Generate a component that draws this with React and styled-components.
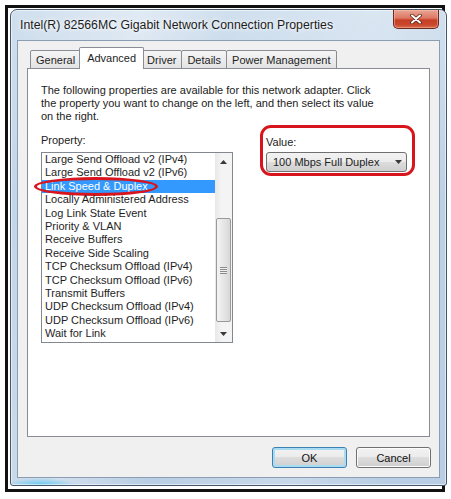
import React from "react";
import styled, { createGlobalStyle } from "styled-components";

const Global = createGlobalStyle`
  html, body { margin: 0; padding: 0; background: #fff; }
  body { font-family: "Liberation Sans", Arial, sans-serif; color: #222; }
  * { box-sizing: border-box; }
`;

const Page = styled.div`
  width: 451px;
  height: 499px;
  padding: 5px 6px 7px 5px;
  background: #fff;
`;

const Outline = styled.div`
  width: 440px;
  height: 487px;
  border: 3px solid #111;
  padding: 1px 3px 3px 2px;
  display: flex;
`;

const Window = styled.div`
  flex: 1;
  display: flex;
  flex-direction: column;
  border: 1px solid #46566a;
  border-radius: 7px 7px 3px 3px;
  padding: 0 6px 7px 6px;
  background:
    radial-gradient(ellipse 36px 7px at 30px 100%, rgba(90, 200, 240, 0.95), rgba(90, 200, 240, 0) 100%),
    linear-gradient(100deg, rgba(255,255,255,0) 0%, rgba(255,255,255,0.35) 25%, rgba(255,255,255,0) 42%, rgba(255,255,255,0.22) 70%, rgba(255,255,255,0) 88%),
    linear-gradient(180deg, #d0dfee 0%, #bdd1e6 40%, #b9cee4 100%);
  box-shadow: inset 0 0 0 1px rgba(255, 255, 255, 0.55);
`;

const TitleBar = styled.div`
  height: 30px;
  display: flex;
  justify-content: space-between;
  align-items: flex-start;
`;

const Title = styled.div`
  align-self: center;
  padding-left: 3px;
  font-size: 12.3px;
  line-height: 15px;
  color: #1c1c1c;
  white-space: nowrap;
  text-shadow: 0 0 6px rgba(255, 255, 255, 0.95), 0 0 3px rgba(255, 255, 255, 0.9);
`;

const CloseButton = styled.div`
  width: 46px;
  height: 19px;
  margin-right: 1px;
  border: 1px solid #6b2a20;
  border-top: none;
  border-radius: 0 0 5px 5px;
  display: flex;
  align-items: center;
  justify-content: center;
  background: linear-gradient(180deg, #e9a595 0%, #dc7862 45%, #c73f27 55%, #c8462c 80%, #d86a4c 100%);
  box-shadow: inset 0 0 0 1px rgba(255, 200, 180, 0.45);
`;

const Client = styled.div`
  flex: 1;
  display: flex;
  flex-direction: column;
  background: #f0f0f0;
  border: 1px solid #8b9db3;
  padding: 6px 9px 9px 9px;
`;

const TabRow = styled.div`
  height: 22px;
  display: flex;
  align-items: flex-end;
  padding-left: 3px;
  margin-bottom: -1px;
  position: relative;
  z-index: 1;
`;

const Tab = styled.div`
  height: ${(p) => (p.$active ? "22px" : "19px")};
  padding: ${(p) => (p.$active ? "0 7px 2px" : "0 5px")};
  margin: ${(p) => (p.$active ? "0 -2px 0 -2px" : "0 0 0 -1px")};
  display: flex;
  align-items: center;
  font-size: 11px;
  white-space: nowrap;
  color: #1e1e1e;
  border: 1px solid #898c95;
  border-bottom: ${(p) => (p.$active ? "none" : "1px solid #898c95")};
  border-radius: 2px 2px 0 0;
  background: ${(p) =>
    p.$active ? "#fff" : "linear-gradient(180deg, #f5f5f5 0%, #ececec 50%, #e3e3e3 100%)"};
  position: relative;
  z-index: ${(p) => (p.$active ? 2 : 1)};
  &:first-child { margin-left: 0; }
`;

const Panel = styled.div`
  flex: 1;
  background: #fff;
  border: 1px solid #898c95;
  padding: 14.5px 14px 0 13px;
`;

const Intro = styled.p`
  margin: 0;
  font-size: 11px;
  line-height: 13px;
  white-space: nowrap;
`;

const Fields = styled.div`
  display: flex;
  align-items: flex-start;
  margin-top: 2.5px;
`;

const PropertyColumn = styled.div`
  padding-top: 8.5px;
  width: 192px;
`;

const FieldLabel = styled.div`
  font-size: 11px;
  line-height: 13px;
`;

const ListBox = styled.div`
  margin-top: 5.5px;
  width: 192px;
  height: 191px;
  border: 1px solid #828790;
  background: #fff;
  display: flex;
`;

const Items = styled.div`
  flex: 1;
  display: flex;
  flex-direction: column;
`;

const Item = styled.div`
  height: 13.4px;
  line-height: 13.4px;
  padding-left: 3px;
  font-size: 11px;
  white-space: nowrap;
  position: relative;
  color: ${(p) => (p.$selected ? "#fff" : "#1e1e1e")};
  background: ${(p) => (p.$selected ? "#3399ff" : "transparent")};
`;

const Ring = styled.span`
  position: absolute;
  left: -8px;
  top: -3px;
  width: 124px;
  height: 19px;
  border: 3px solid #d8141c;
  border-radius: 50%;
  pointer-events: none;
`;

const ScrollBar = styled.div`
  width: 17px;
  display: flex;
  flex-direction: column;
  background: linear-gradient(90deg, #e8e8e8 0%, #f4f4f4 40%, #f4f4f4 100%);
`;

const ScrollButton = styled.div`
  height: 17px;
  display: flex;
  align-items: center;
  justify-content: center;
`;

const Track = styled.div`
  flex: 1;
  display: flex;
  flex-direction: column;
  justify-content: flex-end;
  padding: 0 1px 3px 1px;
`;

const Thumb = styled.div`
  height: 104px;
  border: 1px solid #9a9a9a;
  border-radius: 2px;
  background: linear-gradient(90deg, #f4f4f4 0%, #e6e6e6 50%, #d8d8d8 100%);
  display: flex;
  align-items: center;
  justify-content: center;
`;

const Grip = styled.div`
  width: 7px;
  height: 7px;
  background: repeating-linear-gradient(180deg, #8a8a8a 0px, #8a8a8a 1px, #f0f0f0 1px, #f0f0f0 2px);
`;

const ValueBox = styled.div`
  margin-left: 27px;
  width: 155px;
  border: 3px solid #d8141c;
  border-radius: 11px;
  padding: 7.5px 5px 1px 3px;
`;

const Combo = styled.div`
  margin-top: 3.5px;
  height: 20px;
  border: 1px solid #707070;
  border-radius: 3px;
  padding: 0 4px 0 6px;
  display: flex;
  align-items: center;
  justify-content: space-between;
  font-size: 11px;
  color: #1e1e1e;
  background: linear-gradient(180deg, #f2f2f2 0%, #ebebeb 50%, #dddddd 50%, #cfcfcf 100%);
`;

const ButtonRow = styled.div`
  display: flex;
  justify-content: flex-end;
  gap: 9px;
  margin-top: 10px;
  margin-right: -1px;
`;

const Button = styled.div`
  width: 75px;
  height: 21px;
  display: flex;
  align-items: center;
  justify-content: center;
  font-size: 11px;
  color: #111;
  border: 1px solid ${(p) => (p.$default ? "#3c7fb1" : "#707070")};
  border-radius: 3px;
  background: linear-gradient(180deg, #f2f2f2 0%, #ebebeb 50%, #dddddd 50%, #cfcfcf 100%);
  box-shadow: ${(p) => (p.$default ? "inset 0 0 0 2px #a9dcf2" : "inset 0 0 0 1px #fcfcfc")};
`;

const Arrow = ({ up }) => (
  <svg width="7" height="4" viewBox="0 0 7 4">
    <polygon points={up ? "0,4 7,4 3.5,0" : "0,0 7,0 3.5,4"} fill="#3a3a3a" />
  </svg>
);

const CloseGlyph = () => (
  <svg width="12" height="10" viewBox="0 0 12 10">
    <path d="M2 1.5 L10 8.5 M10 1.5 L2 8.5" stroke="#5a2418" strokeWidth="3.6" strokeLinecap="round" />
    <path d="M2 1.5 L10 8.5 M10 1.5 L2 8.5" stroke="#ffffff" strokeWidth="2" strokeLinecap="round" />
  </svg>
);

const tabs = ["General", "Advanced", "Driver", "Details", "Power Management"];

const properties = [
  "Large Send Offload v2 (IPv4)",
  "Large Send Offload v2 (IPv6)",
  "Link Speed & Duplex",
  "Locally Administered Address",
  "Log Link State Event",
  "Priority & VLAN",
  "Receive Buffers",
  "Receive Side Scaling",
  "TCP Checksum Offload (IPv4)",
  "TCP Checksum Offload (IPv6)",
  "Transmit Buffers",
  "UDP Checksum Offload (IPv4)",
  "UDP Checksum Offload (IPv6)",
  "Wait for Link",
];

export default function App() {
  return (
    <Page>
      <Global />
      <Outline>
        <Window>
          <TitleBar>
            <Title>Intel(R) 82566MC Gigabit Network Connection Properties</Title>
            <CloseButton>
              <CloseGlyph />
            </CloseButton>
          </TitleBar>
          <Client>
            <TabRow>
              {tabs.map((t) => (
                <Tab key={t} $active={t === "Advanced"}>
                  {t}
                </Tab>
              ))}
            </TabRow>
            <Panel>
              <Intro>
                The following properties are available for this network adapter. Click
                <br />
                the property you want to change on the left, and then select its value
                <br />
                on the right.
              </Intro>
              <Fields>
                <PropertyColumn>
                  <FieldLabel>Property:</FieldLabel>
                  <ListBox>
                    <Items>
                      {properties.map((p) => (
                        <Item key={p} $selected={p === "Link Speed & Duplex"}>
                          {p}
                          {p === "Link Speed & Duplex" && <Ring />}
                        </Item>
                      ))}
                    </Items>
                    <ScrollBar>
                      <ScrollButton>
                        <Arrow up />
                      </ScrollButton>
                      <Track>
                        <Thumb>
                          <Grip />
                        </Thumb>
                      </Track>
                      <ScrollButton>
                        <Arrow />
                      </ScrollButton>
                    </ScrollBar>
                  </ListBox>
                </PropertyColumn>
                <ValueBox>
                  <FieldLabel>Value:</FieldLabel>
                  <Combo>
                    <span>100 Mbps Full Duplex</span>
                    <Arrow />
                  </Combo>
                </ValueBox>
              </Fields>
            </Panel>
            <ButtonRow>
              <Button $default>OK</Button>
              <Button>Cancel</Button>
            </ButtonRow>
          </Client>
        </Window>
      </Outline>
    </Page>
  );
}
